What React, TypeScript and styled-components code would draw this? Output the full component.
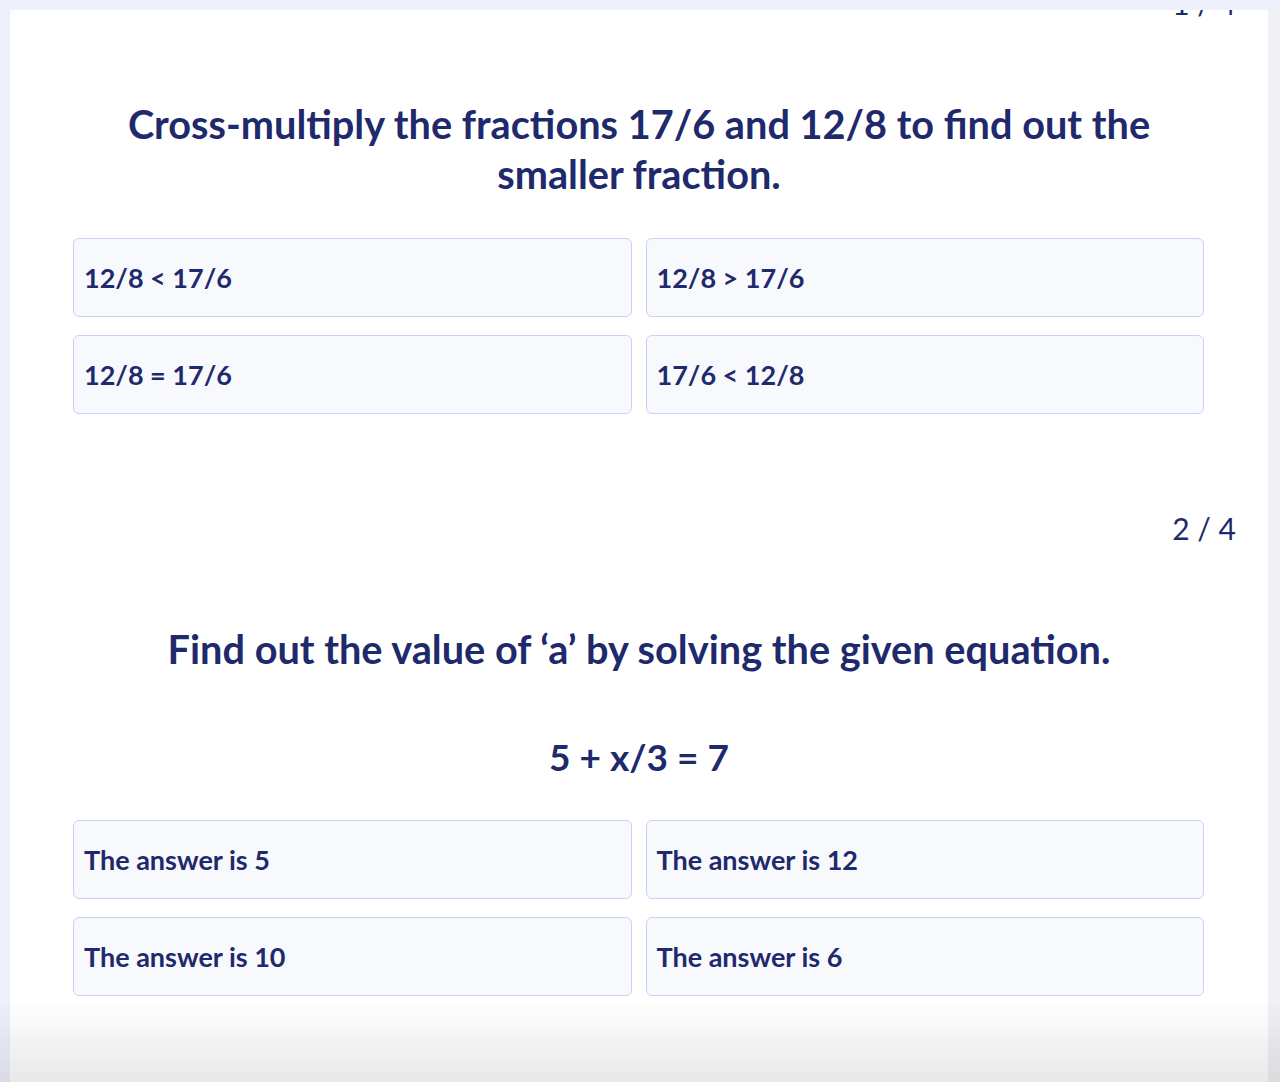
import React from 'react';
import styled, { createGlobalStyle } from 'styled-components';

const GlobalStyle = createGlobalStyle`
  html, body {
    margin: 0;
    padding: 0;
    background: #eef1fc;
    font-family: Lato, "Noto Sans", Arial, sans-serif;
    overflow: hidden;
  }
`;

const Shell = styled.div`
  display: flex;
  height: 1082px;
  padding: 10px 0 0 10px;
  box-sizing: border-box;
  background: #eef1fc;
`;

const Card = styled.main`
  flex: 1;
  background: #ffffff;
  overflow: hidden;
`;

const ScrollTrack = styled.div`
  width: 12px;
  background: #f1f1f5;
`;

// scrolled a little: the first counter is cut by the top edge
const Scroller = styled.div`
  margin-top: -27px;
`;

const Question = styled.section`
  display: flex;
  flex-direction: column;
  padding-bottom: 94px;
`;

const Counter = styled.div`
  align-self: flex-end;
  padding-right: 32px;
  font-size: 30px;
  line-height: 40px;
  color: #1f2a6c;
`;

const Title = styled.h2`
  margin: 76px 0 0;
  padding: 0 110px;
  text-align: center;
  font-size: 39.7px;
  line-height: 50px;
  font-weight: 700;
  color: #1f2a6c;
`;

const Equation = styled.p`
  margin: 63px 0 4px;
  text-align: center;
  font-size: 37px;
  line-height: 40px;
  font-weight: 700;
  color: #1f2a6c;
`;

const Options = styled.div`
  display: grid;
  grid-template-columns: 1fr 1fr;
  gap: 18px 14px;
  margin-top: 39px;
  padding: 0 64px 0 63px;
`;

const Option = styled.button`
  display: flex;
  align-items: center;
  height: 79px;
  padding: 0 10px;
  box-sizing: border-box;
  background: #f8f9fc;
  border: 1px solid #c9d0fa;
  border-radius: 6px;
  font-family: inherit;
  font-size: 27px;
  font-weight: 700;
  color: #1f2a6c;
  text-align: left;
  cursor: pointer;
`;

const Fade = styled.div`
  position: fixed;
  left: 0;
  right: 0;
  bottom: 0;
  height: 82px;
  pointer-events: none;
  background: linear-gradient(to bottom, rgba(0, 0, 0, 0), rgba(0, 0, 0, 0.09));
`;

type QuestionData = {
  title: string;
  equation?: string;
  options: string[];
};

const questions: QuestionData[] = [
  {
    title: 'Cross-multiply the fractions 17/6 and 12/8 to find out the smaller fraction.',
    options: ['12/8 < 17/6', '12/8 > 17/6', '12/8 = 17/6', '17/6 < 12/8'],
  },
  {
    title: 'Find out the value of ‘a’ by solving the given equation.',
    equation: '5 + x/3 = 7',
    options: ['The answer is 5', 'The answer is 12', 'The answer is 10', 'The answer is 6'],
  },
];

const App = () => {
  return (
    <>
      <GlobalStyle />
      <Shell>
        <Card>
          <Scroller>
            {questions.map((q, i) => (
              <Question key={q.title}>
                <Counter>
                  {i + 1} / 4
                </Counter>
                <Title>{q.title}</Title>
                {q.equation && <Equation>{q.equation}</Equation>}
                <Options>
                  {q.options.map((o) => (
                    <Option key={o}>{o}</Option>
                  ))}
                </Options>
              </Question>
            ))}
          </Scroller>
        </Card>
        <ScrollTrack />
      </Shell>
      <Fade />
    </>
  );
};

export default App;
